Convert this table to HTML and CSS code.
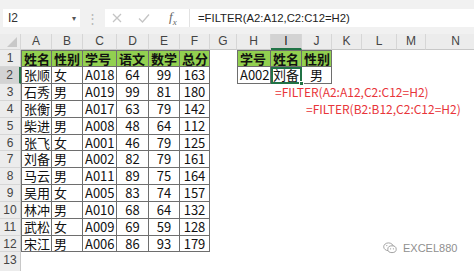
FILE: index.html
```html
<!DOCTYPE html>
<html>
<head>
<meta charset="utf-8">
<link rel="stylesheet" href="styles.css">
</head>
<body>
<div class="app">
  <div class="toolbar">
    <div class="namebox"><span class="ref">I2</span><span class="caret">▾</span></div>
    <div class="dots">⋮</div>
    <div class="fbar">
      <div class="ficons">
        <svg class="ic" width="12" height="12" viewBox="0 0 12 12"><path d="M2 2L10 10M10 2L2 10" stroke="#c4c4c4" stroke-width="1.3" fill="none"/></svg>
        <svg class="ic" width="14" height="12" viewBox="0 0 14 12"><path d="M2 6.5L5.5 10L12 2.5" stroke="#c4c4c4" stroke-width="1.3" fill="none"/></svg>
        <span class="fx">f<sub>x</sub></span>
      </div>
      <div class="ftext">=FILTER(A2:A12,C2:C12=H2)</div>
    </div>
  </div>

  <div class="sheet">
    <div class="corner"><svg width="10" height="10" viewBox="0 0 10 10"><path d="M10 0V10H0Z" fill="#c8c8c8"/></svg></div>
    <div class="ch">A</div><div class="ch">B</div><div class="ch">C</div><div class="ch">D</div><div class="ch">E</div><div class="ch">F</div><div class="ch">G</div><div class="ch">H</div><div class="ch sel">I</div><div class="ch">J</div><div class="ch">K</div><div class="ch">L</div><div class="ch">M</div><div class="ch">N</div>

    <div class="rh">1</div>
    <div class="c t hd l tp">姓名</div><div class="c t hd tp">性别</div><div class="c t hd tp">学号</div><div class="c t hd tp">语文</div><div class="c t hd tp">数学</div><div class="c t hd tp">总分</div>
    <div class="c"></div>
    <div class="c t hd l tp">学号</div><div class="c t hd tp">姓名</div><div class="c t hd tp">性别</div>
    <div class="c"></div><div class="c"></div><div class="c"></div><div class="c"></div>

    <div class="rh sel">2</div>
    <div class="c t l">张顺</div><div class="c t">女</div><div class="c t">A018</div><div class="c t n">64</div><div class="c t n">99</div><div class="c t n">163</div>
    <div class="c"></div>
    <div class="c t l">A002</div><div class="c t n active">刘备<span class="handle"></span></div><div class="c t n">男</div>
    <div class="c"></div><div class="c"></div><div class="c"></div><div class="c"></div>

    <div class="rh">3</div>
    <div class="c t l">石秀</div><div class="c t">男</div><div class="c t">A019</div><div class="c t n">99</div><div class="c t n">81</div><div class="c t n">180</div>
    <div class="c"></div><div class="c"></div>
    <div class="c red">=FILTER(A2:A12,C2:C12=H2)</div>
    <div class="c"></div><div class="c"></div><div class="c"></div><div class="c"></div><div class="c"></div>

    <div class="rh">4</div>
    <div class="c t l">张衡</div><div class="c t">男</div><div class="c t">A017</div><div class="c t n">63</div><div class="c t n">79</div><div class="c t n">142</div>
    <div class="c"></div><div class="c"></div><div class="c"></div>
    <div class="c red">=FILTER(B2:B12,C2:C12=H2)</div>
    <div class="c"></div><div class="c"></div><div class="c"></div><div class="c"></div>

    <div class="rh">5</div>
    <div class="c t l">柴进</div><div class="c t">男</div><div class="c t">A008</div><div class="c t n">48</div><div class="c t n">64</div><div class="c t n">112</div>
    <div class="c span8"></div>

    <div class="rh">6</div>
    <div class="c t l">张飞</div><div class="c t">女</div><div class="c t">A001</div><div class="c t n">46</div><div class="c t n">79</div><div class="c t n">125</div>
    <div class="c span8"></div>

    <div class="rh">7</div>
    <div class="c t l">刘备</div><div class="c t">男</div><div class="c t">A002</div><div class="c t n">82</div><div class="c t n">79</div><div class="c t n">161</div>
    <div class="c span8"></div>

    <div class="rh">8</div>
    <div class="c t l">马云</div><div class="c t">男</div><div class="c t">A011</div><div class="c t n">89</div><div class="c t n">75</div><div class="c t n">164</div>
    <div class="c span8"></div>

    <div class="rh">9</div>
    <div class="c t l">吴用</div><div class="c t">女</div><div class="c t">A005</div><div class="c t n">83</div><div class="c t n">74</div><div class="c t n">157</div>
    <div class="c span8"></div>

    <div class="rh">10</div>
    <div class="c t l">林冲</div><div class="c t">男</div><div class="c t">A010</div><div class="c t n">68</div><div class="c t n">64</div><div class="c t n">132</div>
    <div class="c span8"></div>

    <div class="rh">11</div>
    <div class="c t l">武松</div><div class="c t">女</div><div class="c t">A009</div><div class="c t n">69</div><div class="c t n">59</div><div class="c t n">128</div>
    <div class="c span8"></div>

    <div class="rh">12</div>
    <div class="c t l">宋江</div><div class="c t">男</div><div class="c t">A006</div><div class="c t n">86</div><div class="c t n">93</div><div class="c t n">179</div>
    <div class="c span8"></div>

    <div class="rh">13</div>
    <div class="c span14"></div>

    <div class="watermark">
      <svg width="14" height="12" viewBox="0 0 14 12"><ellipse cx="5.5" cy="4.8" rx="4.8" ry="3.9" fill="#fff" stroke="#9a9a9a" stroke-width="0.9"/><ellipse cx="9" cy="7.2" rx="4.2" ry="3.4" fill="#fff" stroke="#9a9a9a" stroke-width="0.9"/><circle cx="7.6" cy="6.8" r="0.6" fill="#9a9a9a"/><circle cx="10.4" cy="6.8" r="0.6" fill="#9a9a9a"/><circle cx="3.8" cy="3.6" r="0.6" fill="#9a9a9a"/></svg>
      <span>EXCEL880</span>
    </div>
  </div>
</div>
</body>
</html>
```

FILE: styles.css
```css
* { box-sizing: border-box; }
html, body { margin: 0; padding: 0; background: #fff; }
body { width: 474px; height: 271px; overflow: hidden; font-family: "Noto Sans CJK SC", "Liberation Sans", sans-serif; }

.app { width: 474px; height: 271px; overflow: hidden; }

.toolbar {
  height: 34px;
  background: #f1f1f1;
  display: flex;
  align-items: flex-start;
  padding: 9px 0 0 3px;
}
.namebox {
  width: 77px; height: 18px;
  background: #fff;
  display: flex; align-items: center; justify-content: space-between;
  padding: 0 4px 0 5px;
  font-size: 12px; color: #333;
  font-family: "Liberation Sans", sans-serif;
}
.caret { font-size: 8px; color: #555; }
.dots { width: 25px; text-align: center; color: #b8b8b8; font-size: 13px; line-height: 18px; }
.fbar {
  flex: 1; height: 18px; background: #fff;
  display: flex; align-items: center;
}
.ficons {
  width: 85px; height: 18px;
  display: flex; align-items: center;
  padding-left: 6px; gap: 14px;
  border-right: 1px solid #e2e2e2;
}
.fx { font-family: "Liberation Serif", serif; font-style: italic; font-size: 13px; color: #666; margin-left: 4px; }
.fx sub { font-size: 9px; }
.ftext { padding-left: 8px; font-size: 11.3px; color: #222; font-family: "Liberation Sans", sans-serif; }

.sheet {
  position: relative;
  display: grid;
  grid-template-columns: 21px 31px 31px 34px 32px 31px 30px 27px 34px 31px 30px 30px 35px 29px 60px;
  grid-template-rows: 16px 17px 17px 17px 17px 17px 16px 17px 17px 17px 17px 17px 16px 20px;
}
.corner {
  background: #ececec;
  border-right: 1px solid #d6d6d6;
  border-bottom: 1px solid #d6d6d6;
  display: flex; align-items: flex-end; justify-content: flex-end;
  padding: 0 3px 2px 0;
}
.ch {
  background: #ececec;
  border-right: 1px solid #d6d6d6;
  border-bottom: 1px solid #c8c8c8;
  text-align: center;
  font-size: 12px; line-height: 15px; color: #444;
  font-family: "Liberation Sans", sans-serif;
}
.ch.sel { background: #d3d3d3; border-bottom: 2px solid #217346; color: #222; }
.rh {
  background: #ececec;
  border-right: 1px solid #c8c8c8;
  border-bottom: 1px solid #d6d6d6;
  text-align: center;
  font-size: 12px; line-height: 16px; color: #444;
  font-family: "Liberation Sans", sans-serif;
}
.rh.sel { background: #d3d3d3; border-right: 2px solid #217346; }

.c {
  font-size: 13px; line-height: 16px;
  white-space: nowrap;
  padding-left: 2px;
  color: #111;
}
.span8 { grid-column: span 8; }
.span14 { grid-column: span 14; }
.t { border-right: 1px solid #6e6e6e; border-bottom: 1px solid #6e6e6e; background: #fff; }
.t.l { border-left: 1px solid #6e6e6e; }
.t.tp { border-top: 1px solid #6e6e6e; line-height: 15px; }
.hd { background: #92d050; font-weight: bold; }
.n { text-align: center; padding-left: 0; }
.active { position: relative; outline: 2px solid #217346; outline-offset: -2px; }
.handle { position: absolute; right: -3px; bottom: -3px; width: 5px; height: 5px; background: #217346; border: 1px solid #fff; }
.red { color: #e8353a; font-size: 12px; overflow: visible; padding-left: 4px; }

.watermark {
  position: absolute; left: 383px; top: 208px;
  display: flex; align-items: center; gap: 6px;
  font-family: "Liberation Sans", sans-serif; font-size: 11px; color: #8f8f8f;
}
```
